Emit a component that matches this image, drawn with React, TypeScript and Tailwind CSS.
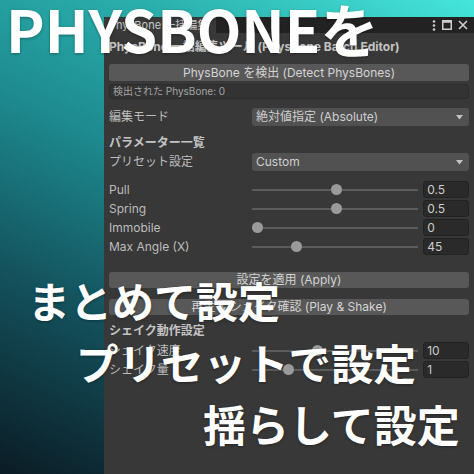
import React from "react";

const UI_FONT = { fontFamily: '"Inter", "Noto Sans CJK JP", sans-serif' };
const BIG_FONT = { fontFamily: '"Noto Sans CJK JP", "Noto Sans", sans-serif' };

function Dropdown({ text }: { text: string }) {
  return (
    <div className="flex h-[18px] w-[217px] items-center justify-between rounded-[3px] bg-[#515151] pl-[4px] pr-[6px] text-[12px] text-[#cfcfcf]">
      <span>{text}</span>
      <svg width="7" height="5" viewBox="0 0 7 5">
        <path d="M0 0 L7 0 L3.5 4.5 Z" fill="#c4c4c4" />
      </svg>
    </div>
  );
}

function SliderRow({ label, pos, value }: { label: string; pos: number; value: string }) {
  return (
    <div className="flex h-[17px] items-center">
      <div className="w-[143px] text-[12px] text-[#bdbdbd]">{label}</div>
      <div className="relative h-[17px] w-[167px]">
        <div className="absolute left-0 right-0 top-[8px] h-[2px] bg-[#5c5c5c]" />
        <div
          className="absolute top-[3px] h-[11px] w-[11px] rounded-full bg-[#9a9a9a]"
          style={{ left: `${pos}px` }}
        />
      </div>
      <div className="ml-[5px] flex h-[17px] w-[46px] items-center rounded-[3px] border border-[#222] bg-[#2a2a2a] pl-[3px] text-[12px] text-[#cccccc]">
        {value}
      </div>
    </div>
  );
}

function Button({ text }: { text: string }) {
  return (
    <div className="flex h-[16px] items-center justify-center rounded-[3px] bg-[#585858] text-[12px] text-[#d4d4d4]">
      {text}
    </div>
  );
}

const overlay =
  "pointer-events-none absolute whitespace-nowrap font-bold text-white [text-shadow:0_1px_3px_rgba(0,0,0,0.35)]";

export default function App() {
  return (
    <div className="relative h-[474px] w-[474px] overflow-hidden bg-[linear-gradient(205deg,#45e6dc_0%,#2bb0ad_22%,#1d8a8f_45%,#134f5a_72%,#0b1c25_100%)]">
      <div className="flex h-full flex-col pl-[104px] pt-[17px]">
        <div className="flex h-full flex-col bg-[#383838]" style={UI_FONT}>
          {/* title bar */}
          <div className="flex h-[16px] items-center bg-[#222222]">
            <div className="flex h-full w-[112px] items-center bg-[#3a3a3a] pl-[5px] text-[11px] text-[#c8c8c8]">
              PhysBone 一括編集
            </div>
            <div className="flex-1" />
            <div className="flex items-center gap-[6px] pr-[6px] text-[#cfcfcf]">
              <svg width="4" height="11" viewBox="0 0 4 11">
                <circle cx="2" cy="1.5" r="1.3" fill="#cfcfcf" />
                <circle cx="2" cy="5.5" r="1.3" fill="#cfcfcf" />
                <circle cx="2" cy="9.5" r="1.3" fill="#cfcfcf" />
              </svg>
              <svg width="10" height="10" viewBox="0 0 10 10">
                <rect x="0.75" y="0.75" width="8.5" height="8.5" fill="none" stroke="#cfcfcf" strokeWidth="1.5" />
                <rect x="0.75" y="0.75" width="8.5" height="2" fill="#cfcfcf" />
              </svg>
              <svg width="10" height="10" viewBox="0 0 10 10">
                <path d="M1 1 L9 9 M9 1 L1 9" stroke="#cfcfcf" strokeWidth="1.6" />
              </svg>
            </div>
          </div>

          <div className="flex flex-col pl-[5px] pr-[5px]">
            <div className="mt-[6px] flex h-[16px] items-center text-[12px] font-bold text-[#c4c4c4]">
              PhysBone 一括編集ツール (PhysBone Batch Editor)
            </div>
            <div className="mt-[9px] flex h-[17px] items-center justify-center rounded-[3px] bg-[#585858] text-[12px] text-[#d4d4d4]">
              PhysBone を検出 (Detect PhysBones)
            </div>
            <div className="mt-[3px] flex h-[15px] items-center rounded-[3px] border border-[#2c2c2c] bg-[#333333] pl-[3px] text-[10px] text-[#a4a4a4]">
              検出された PhysBone: 0
            </div>

            <div className="mt-[9px] flex h-[18px] items-center justify-between">
              <span className="text-[12px] text-[#bdbdbd]">編集モード</span>
              <Dropdown text="絶対値指定 (Absolute)" />
            </div>

            <div className="mt-[9px] flex h-[16px] items-center text-[12px] font-bold text-[#c4c4c4]">
              パラメーター一覧
            </div>
            <div className="mt-[2px] flex h-[18px] items-center justify-between">
              <span className="text-[12px] text-[#bdbdbd]">プリセット設定</span>
              <Dropdown text="Custom" />
            </div>

            <div className="mt-[10px] flex flex-col gap-[2px]">
              <SliderRow label="Pull" pos={79} value="0.5" />
              <SliderRow label="Spring" pos={79} value="0.5" />
              <SliderRow label="Immobile" pos={0} value="0" />
              <SliderRow label="Max Angle (X)" pos={39} value="45" />
            </div>

            <div className="mt-[17px]">
              <Button text="設定を適用 (Apply)" />
            </div>
            <div className="mt-[11px]">
              <Button text="再生 & シェイク確認 (Play & Shake)" />
            </div>

            <div className="mt-[8px] flex h-[16px] items-center text-[12px] font-bold text-[#c4c4c4]">
              シェイク動作設定
            </div>
            <div className="mt-[3px] flex flex-col gap-[2px]">
              <SliderRow label="シェイク速度" pos={60} value="10" />
              <SliderRow label="シェイク量" pos={31} value="1" />
            </div>
          </div>
        </div>
      </div>

      {/* overlay headline text */}
      <div className={`${overlay} left-[6px] top-[-8px] text-[58px] leading-[72px]`} style={BIG_FONT}>
        PHYSBONEを
      </div>
      <div className={`${overlay} left-[28px] top-[272px] text-[42px] leading-[56px]`} style={BIG_FONT}>
        まとめて設定
      </div>
      <div className={`${overlay} left-[76px] top-[334px] text-[42.5px] leading-[56px]`} style={BIG_FONT}>
        プリセットで設定
      </div>
      <div className={`${overlay} left-[203px] top-[395px] text-[43px] leading-[56px]`} style={BIG_FONT}>
        揺らして設定
      </div>
    </div>
  );
}
